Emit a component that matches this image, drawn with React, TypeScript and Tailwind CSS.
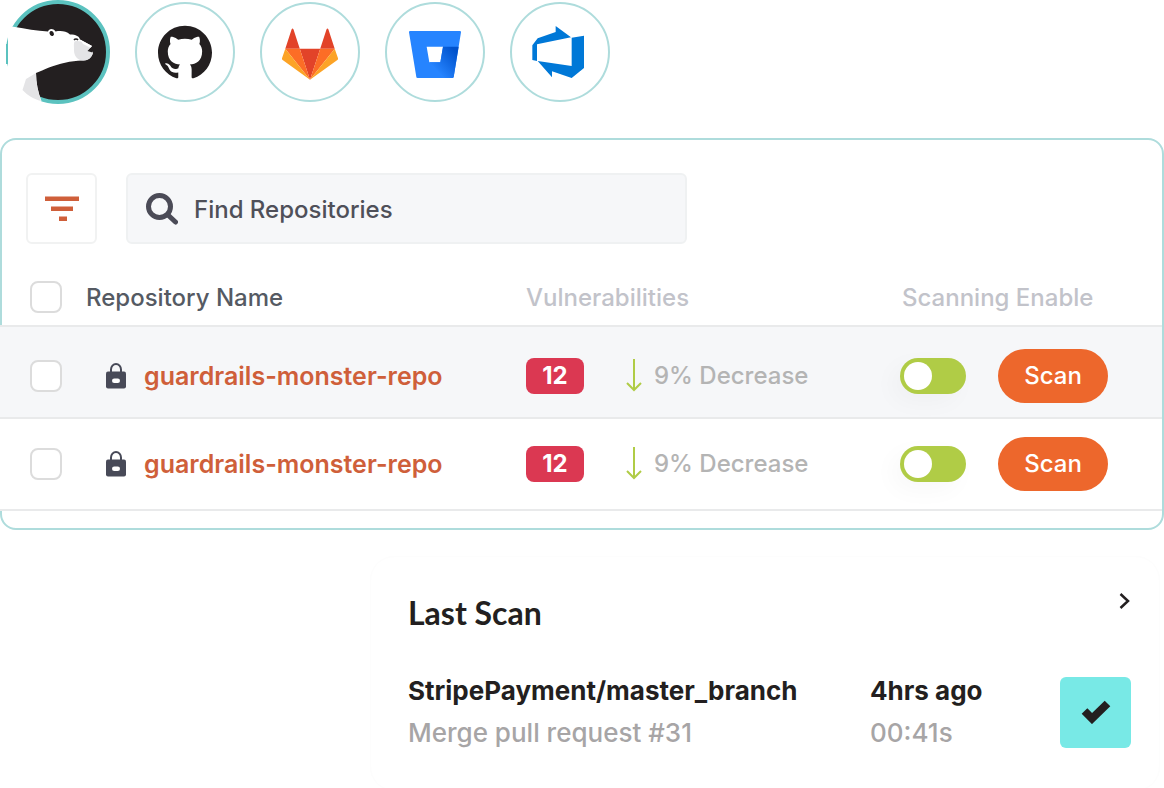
import React, { useState } from 'react';
import { SiGithub } from 'react-icons/si';

interface Repository {
  id: string;
  name: string;
  vulnerabilities: number;
  trend: string;
}

const repositories: Repository[] = [
  { id: 'repo-1', name: 'guardrails-monster-repo', vulnerabilities: 12, trend: '9% Decrease' },
  { id: 'repo-2', name: 'guardrails-monster-repo', vulnerabilities: 12, trend: '9% Decrease' },
];

const BearLogo: React.FC = () => (
  <svg viewBox="0 0 104 104" className="size-[104px]" aria-hidden="true">
    <circle cx="52" cy="52" r="50" fill="#231f20" stroke="#5bc2bf" strokeWidth="4" />
    <path
      d="M2 104V27.500C4 26.500 7 26.500 9 27C19 28.500 31 31 42 31.500C43 28.500 47 28 49.500 31.500C55 30.500 60 31 64 34.500C70 34.500 73.500 36.500 74 39.500L86 46L82 50.500L87 52C86.500 56 84 60 78 60.500C67 60 53 64 43 67.500C38 69.500 34 71.500 30 73C30 83 32 92 35.500 101L30 104Z"
      fill="#fff"
    />
    <path d="M1 44V64" stroke="#5bc2bf" strokeWidth="2" />
    <path d="M68.500 41.500C71 40.500 75 41 80 43.500L85.500 46L82 50.500L87 52C86.500 57 82 60.500 77 60.500C71 60 68 56 68 50C68 46 67.500 43.500 68.500 41.500Z" fill="#e4e4e6" />
    <path d="M74 39.500L86 46L85 48L77 44Z" fill="#fff" />
    <path d="M86 46.500L81.500 51L86.500 52.500Z" fill="#231f20" />
    <path d="M68 40C69 38.500 71 38.500 72 40" stroke="#231f20" strokeWidth="1.500" fill="none" />
    <ellipse cx="45.700" cy="33.500" rx="2" ry="2.600" transform="rotate(-35 45.700 33.500)" fill="#231f20" />
    <path d="M30 73L20 79L16.500 90C22 96 28 99 35 101C32 92 30 82 30 73Z" fill="#e4e4e6" />
  </svg>
);

const GitlabLogo: React.FC = () => (
  <svg viewBox="125 72 170 168" className="h-14 w-14" aria-hidden="true">
    <path d="M135 146L154 88Q157 81 160 88L179 146ZM241 146L260 88Q263 81 266 88L285 146ZM179 146H241L210 240Z" fill="#e24329" />
    <path d="M135 146H179L210 240ZM285 146H241L210 240Z" fill="#fc6d26" />
    <path d="M135 146L125 175Q124 179 128 181L210 240ZM285 146L295 175Q296 179 292 181L210 240Z" fill="#fca326" />
  </svg>
);

const BitbucketLogo: React.FC = () => (
  <svg viewBox="504 81 159 153" className="h-[51px] w-[53px]" aria-hidden="true">
    <defs>
      <linearGradient id="bucket" x1="650" y1="140" x2="580" y2="205" gradientUnits="userSpaceOnUse">
        <stop offset="0.15" stopColor="#0052cc" />
        <stop offset="1" stopColor="#2684ff" />
      </linearGradient>
    </defs>
    <path d="M507 93H657Q660 93 660 97L638 231Q637 234 634 234H530Q526 234 526 231L504 97Q504 93 507 93ZM557 140L565 187H598L606 140Z" fill="#2684ff" fillRule="evenodd" />
    <path d="M606 140H653L638 231Q637 234 634 234H612L565 187H598Z" fill="url(#bucket)" />
  </svg>
);

const AzureLogo: React.FC = () => (
  <svg viewBox="876 78 168 156" className="h-[52px] w-14" aria-hidden="true">
    <path d="M995 113L1032 107V204L995 234L936 214V232L893 183L995 198ZM993 112L947 78V96L893 115L877 136V180L891 183V133Z" fill="#0078d7" />
  </svg>
);

const LockIcon: React.FC = () => (
  <svg viewBox="0 0 20 26" className="h-[26px] w-5 shrink-0" fill="none" aria-hidden="true">
    <path d="M5 10V6.500a5 5.500 0 0 1 10 0V10" stroke="#484a58" strokeWidth="2" />
    <rect y="8.500" width="20" height="17" rx="2" fill="#484a58" />
    <rect x="6" y="15.500" width="8" height="4.500" rx="2.250" fill="#fff" />
  </svg>
);

const ArrowDown: React.FC = () => (
  <svg viewBox="0 0 16 34" className="h-[34px] w-4 shrink-0" fill="none" stroke="#b0cc46" strokeWidth="2" aria-hidden="true">
    <path d="M8 0V31M1 24L8 31L15 24" />
  </svg>
);

const providers = [
  { name: 'GitHub', icon: <SiGithub className="size-[54px] text-[#231f20]" aria-hidden="true" /> },
  { name: 'GitLab', icon: <GitlabLogo /> },
  { name: 'Bitbucket', icon: <BitbucketLogo /> },
  { name: 'Azure DevOps', icon: <AzureLogo /> },
];

const checkboxClass =
  'block size-8 appearance-none rounded-lg border-2 border-[#dcdcdc] bg-white checked:bg-[#78e9e6]';

const App: React.FC = () => {
  const [query, setQuery] = useState('');
  const [selected, setSelected] = useState<string[]>([]);
  const [disabled, setDisabled] = useState<string[]>([]);

  const toggle = (list: string[], id: string) =>
    list.includes(id) ? list.filter(item => item !== id) : [...list, id];

  const visible = repositories.filter(repo => repo.name.includes(query.toLowerCase()));

  return (
    <div className="bg-white font-['Inter',sans-serif] text-2xl">
      <nav className="flex items-center gap-[25px] pl-1.5" aria-label="Providers">
        <button type="button" aria-label="GuardRails" className="rounded-full">
          <BearLogo />
        </button>
        {providers.map(provider => (
          <button
            key={provider.name}
            type="button"
            aria-label={provider.name}
            className="flex size-[100px] items-center justify-center rounded-full border-2 border-[#aedcdc]"
          >
            {provider.icon}
          </button>
        ))}
      </nav>

      <section className="mt-[34px] rounded-2xl border-2 border-[#aedcdc] pt-[33px] pb-[17px]">
        <div className="flex gap-[29px] px-6">
          <button
            type="button"
            aria-label="Filter"
            className="flex size-[71px] shrink-0 items-center justify-center rounded-md border-2 border-[#f1f2f2]"
          >
            <svg viewBox="0 0 34 26" className="h-[26px] w-[34px]" fill="#cf5f3a" aria-hidden="true">
              <path d="M0 0.500H34V5H0ZM6 10.500H28V15H6ZM14 20.500H22V25H14Z" />
            </svg>
          </button>
          <label className="flex h-[71px] w-full max-w-[561px] items-center gap-4 rounded-md border-2 border-[#eff1f2] bg-[#f6f7f9] px-[18px]">
            <svg viewBox="0 0 32 32" className="size-8 shrink-0" fill="none" stroke="#4b4b57" aria-hidden="true">
              <circle cx="13.500" cy="13.500" r="11" strokeWidth="5" />
              <path d="M22 22L29.500 29" strokeWidth="5" strokeLinecap="round" />
            </svg>
            <input
              type="text"
              aria-label="Find Repositories"
              placeholder="Find Repositories"
              value={query}
              onChange={e => setQuery(e.target.value)}
              className="w-full bg-transparent pt-0.5 font-medium text-[#4f5059] outline-none placeholder:text-[#4f5059]"
            />
          </label>
        </div>

        <table className="mt-6 -ml-0.5 w-[calc(100%+2px)] table-fixed text-left">
          <colgroup>
            <col className="w-[86px]" />
            <col />
            <col className="w-[374px]" />
            <col className="w-[262px]" />
          </colgroup>
          <thead>
            <tr className="h-[58px] border-b-2 border-[#e9eaeb]">
              <th className="pl-[30px]">
                <input
                  type="checkbox"
                  aria-label="Select all"
                  className={checkboxClass}
                  checked={selected.length === repositories.length}
                  onChange={e => setSelected(e.target.checked ? repositories.map(repo => repo.id) : [])}
                />
              </th>
              <th className="pt-0.5 font-medium text-[#555a63]">Repository Name</th>
              <th className="pt-0.5 font-medium text-[#c2c3ca]">Vulnerabilities</th>
              <th className="pt-0.5 pl-0.5 font-medium text-[#c2c3ca]">Scanning Enable</th>
            </tr>
          </thead>
          <tbody>
            {visible.map(repo => (
              <tr key={repo.id} className="h-[92px] border-b-2 border-[#e9eaeb] bg-white first:bg-[#f6f7f9] first:[&>td]:pt-2">
                <td className="pl-[30px]">
                  <input
                    type="checkbox"
                    aria-label="Select repository"
                    className={checkboxClass}
                    checked={selected.includes(repo.id)}
                    onChange={() => setSelected(prev => toggle(prev, repo.id))}
                  />
                </td>
                <td>
                  <div className="flex items-center gap-[18px] pl-5">
                    <LockIcon />
                    <a href="#" className="text-[25px] leading-8 font-semibold text-[#cf5f3a]">{repo.name}</a>
                  </div>
                </td>
                <td>
                  <div className="flex items-center">
                    <span className="flex h-9 w-[58px] items-center justify-center rounded-lg bg-[#db3852] font-bold text-white">
                      {repo.vulnerabilities}
                    </span>
                    <span className="ml-[42px] flex items-center gap-3 font-medium text-[#b4b4b4]">
                      <ArrowDown />
                      {repo.trend}
                    </span>
                  </div>
                </td>
                <td>
                  <div className="flex items-center gap-8">
                    <input
                      type="checkbox"
                      role="switch"
                      aria-label="Scanning enable"
                      checked={!disabled.includes(repo.id)}
                      onChange={() => setDisabled(prev => toggle(prev, repo.id))}
                      className="flex h-9 w-[66px] appearance-none items-center rounded-full bg-gray-300 px-1 shadow-[-8px_8px_24px_rgba(0,0,0,0.03)] before:size-7 before:rounded-full before:bg-white checked:bg-[#b0cc46]"
                    />
                    <button type="button" className="h-[54px] w-[110px] rounded-full bg-[#ed672c] font-medium text-white">
                      Scan
                    </button>
                  </div>
                </td>
              </tr>
            ))}
          </tbody>
        </table>
      </section>

      <section className="mt-[26px] mr-1 ml-auto max-w-[790px] rounded-3xl border border-[#fdfdfd] pt-6 pr-7 pb-9 pl-[37px] text-[#231f20]">
        <div className="flex items-start justify-between">
          <h2 className="pt-3 font-['Lato',sans-serif] text-[32px] leading-10 font-bold">Last Scan</h2>
          <button type="button" aria-label="Open last scan" className="p-3 pr-0">
            <svg viewBox="0 0 12 16" className="h-4 w-3" fill="none" stroke="#231f20" strokeWidth="2.500" aria-hidden="true">
              <path d="M1.500 1L9 8L1.500 15" />
            </svg>
          </button>
        </div>
        <div className="mt-[37px] flex items-center text-[26px] leading-[42px]">
          <div className="flex-1">
            <p className="font-bold">StripePayment/master_branch</p>
            <p className="font-medium text-[#a7a5a6]">Merge pull request #31</p>
          </div>
          <div className="w-[190px]">
            <p className="font-bold">4hrs ago</p>
            <p className="font-medium text-[#a7a5a6]">00:41s</p>
          </div>
          <div className="flex size-[71px] items-center justify-center rounded-md bg-[#78e9e6]">
            <svg viewBox="0 0 30 24" className="h-6 w-[30px]" fill="none" stroke="#231f20" strokeWidth="8" role="img" aria-label="Passed">
              <path d="M3.500 11L11 18.500L26.500 3.500" />
            </svg>
          </div>
        </div>
      </section>
    </div>
  );
};

export default App;
